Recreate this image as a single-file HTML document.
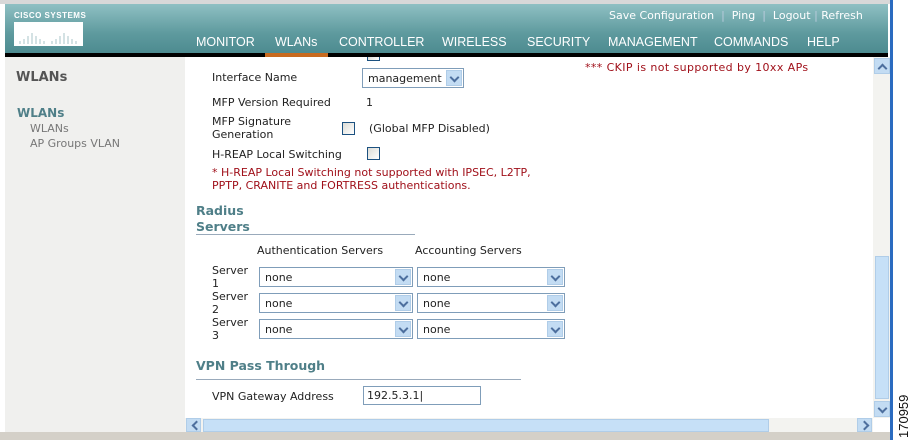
<!DOCTYPE html>
<html><head><style>
*{margin:0;padding:0;box-sizing:border-box}
body{width:912px;height:440px;background:#fff;position:relative;overflow:hidden;font-family:"DejaVu Sans",Verdana,sans-serif;font-size:11px;color:#222}
.a{position:absolute;white-space:nowrap}
.nav{color:#fff;font-family:"Liberation Sans",Arial,sans-serif;font-size:12.5px;top:35px}
.top{color:#fff;font-family:"DejaVu Sans",sans-serif;font-size:11px;top:9px}
.sel{position:absolute;border:1px solid #7f9db9;background:#fff;height:20px;padding:3px 5px;font-size:11px}
.sel i,.btn{position:absolute;right:1px;top:1px;width:16px;height:16px;background:#c3dcf3;border:1px solid #b0cde8}
.sel i:after,.btn:after{content:"";position:absolute;left:4px;top:3px;width:5px;height:5px;border-right:2px solid #4d6f9e;border-bottom:2px solid #4d6f9e;transform:rotate(45deg)}
.btn.up:after{top:6px;transform:rotate(225deg)}
.btn.l:after{left:6px;top:3px;transform:rotate(135deg)}
.btn.r:after{left:3px;top:3px;transform:rotate(-45deg)}
.cb{position:absolute;width:13px;height:13px;border:1px solid #1c5180;background:linear-gradient(135deg,#dcdcd6,#fff)}
.red{color:#a0101a}
.h{color:#4f7f88;font-weight:bold;font-size:12.5px}
</style></head><body>
<div class="a" style="left:0;top:0;width:912px;height:4px;background:#d8d8d8"></div>
<div class="a" style="left:0;top:432px;width:893px;height:8px;background:#d4d0c8"></div>
<div class="a" style="left:5px;top:4px;width:883px;height:49px;background:linear-gradient(#8fc0c3,#5e9a9e 60%,#4d8b90)"></div>
<div class="a" style="left:5px;top:53px;width:883px;height:4px;background:#000"></div>
<div class="a" style="left:265px;top:53px;width:63px;height:4px;background:#c86a1f"></div>
<div class="a" style="left:14px;top:11px;color:#fff;font-weight:bold;font-size:8px;letter-spacing:.5px;font-family:'Liberation Sans',sans-serif">CISCO SYSTEMS</div>
<div class="a" style="left:14px;top:22px;width:69px;height:24px;background:#fff"><svg width="69" height="24"><g stroke="#a9c6c9" stroke-width="1"><path d="M6 22V19M10 22V17M14 22V14M18 22V11M22 22V14M26 22V17M30 22V19M38 22V19M42 22V17M46 22V14M50 22V11M54 22V14M58 22V17M62 22V19"/></g></svg></div>
<div class="a top" style="left:609px">Save Configuration <span style="color:#bcd">&nbsp;|&nbsp;</span> Ping <span style="color:#bcd">&nbsp;|&nbsp;</span> Logout <span style="color:#bcd">|</span> Refresh</div>
<div class="a nav" style="left:196px">MONITOR</div>
<div class="a nav" style="left:275px">WLANs</div>
<div class="a nav" style="left:339px">CONTROLLER</div>
<div class="a nav" style="left:442px">WIRELESS</div>
<div class="a nav" style="left:527px">SECURITY</div>
<div class="a nav" style="left:608px">MANAGEMENT</div>
<div class="a nav" style="left:714px">COMMANDS</div>
<div class="a nav" style="left:807px">HELP</div>
<div class="a" style="left:5px;top:57px;width:180px;height:375px;background:#f0f0ee"></div>
<div class="a" style="left:16px;top:70px;font-size:13px;color:#555;font-weight:bold">WLANs</div>
<div class="a" style="left:17px;top:106px;font-size:12px;color:#4f7f88;font-weight:bold">WLANs</div>
<div class="a" style="left:30px;top:122px;color:#777">WLANs</div>
<div class="a" style="left:30px;top:137px;color:#777">AP Groups VLAN</div>
<div class="cb" style="left:367px;top:57px;height:4px;border-top:none"></div>
<div class="a" style="left:212px;top:71px">Interface Name</div>
<div class="sel" style="left:362px;top:68px;width:102px">management<i></i></div>
<div class="a red" style="left:585px;top:61px;letter-spacing:.4px">*** CKIP is not supported by 10xx APs</div>
<div class="a" style="left:212px;top:96px">MFP Version Required</div>
<div class="a" style="left:366px;top:96px">1</div>
<div class="a" style="left:212px;top:115px;line-height:13px">MFP Signature<br>Generation</div>
<div class="cb" style="left:342px;top:122px"></div>
<div class="a" style="left:369px;top:122px">(Global MFP Disabled)</div>
<div class="a" style="left:212px;top:148px">H-REAP Local Switching</div>
<div class="cb" style="left:367px;top:147px"></div>
<div class="a red" style="left:212px;top:166px;line-height:13px">* H-REAP Local Switching not supported with IPSEC, L2TP,<br>PPTP, CRANITE and FORTRESS authentications.</div>
<div class="a h" style="left:196px;top:203px;line-height:16px">Radius<br>Servers</div>
<div class="a" style="left:196px;top:234px;width:219px;height:1px;background:#9ab"></div>
<div class="a" style="left:257px;top:244px">Authentication Servers</div>
<div class="a" style="left:415px;top:244px">Accounting Servers</div>
<div class="a" style="left:212px;top:264px;line-height:13px">Server<br>1</div>
<div class="a" style="left:212px;top:290px;line-height:13px">Server<br>2</div>
<div class="a" style="left:212px;top:316px;line-height:13px">Server<br>3</div>
<div class="sel" style="left:259px;top:267px;width:154px">none<i></i></div>
<div class="sel" style="left:417px;top:267px;width:148px">none<i></i></div>
<div class="sel" style="left:259px;top:293px;width:154px">none<i></i></div>
<div class="sel" style="left:417px;top:293px;width:148px">none<i></i></div>
<div class="sel" style="left:259px;top:319px;width:154px">none<i></i></div>
<div class="sel" style="left:417px;top:319px;width:148px">none<i></i></div>
<div class="a h" style="left:196px;top:358px">VPN Pass Through</div>
<div class="a" style="left:196px;top:379px;width:325px;height:1px;background:#9ab"></div>
<div class="a" style="left:212px;top:390px">VPN Gateway Address</div>
<div class="a" style="left:363px;top:386px;width:118px;height:19px;border:1px solid #7f9db9;padding:2px 3px">192.5.3.1|</div>
<div class="a" style="left:873px;top:57px;width:17px;height:361px;background:#f3f3f0"></div>
<div class="btn up" style="left:874px;top:58px;right:auto"></div>
<div class="a" style="left:875px;top:256px;width:14px;height:143px;background:#c6e0f7;border:1px solid #b0cde8"></div>
<div class="btn" style="left:874px;top:401px;right:auto"></div>
<div class="a" style="left:185px;top:418px;width:688px;height:14px;background:#f3f3f0"></div>
<div class="btn l" style="left:186px;top:418px;right:auto;height:14px;width:15px"></div>
<div class="a" style="left:203px;top:419px;width:566px;height:13px;background:#c6e0f7;border:1px solid #b0cde8"></div>
<div class="btn r" style="left:857px;top:418px;right:auto;height:14px;width:15px"></div>
<div class="a" style="left:890px;top:0;width:3px;height:440px;background:#2a6bc0"></div>
<div class="a" style="left:893px;top:0;width:19px;height:440px;background:#fff"></div>
<div class="a" style="transform:rotate(-90deg);transform-origin:0 0;font-family:'Liberation Sans',sans-serif;font-size:13px;color:#111;top:438px;left:896px">170959</div>
</body></html>
